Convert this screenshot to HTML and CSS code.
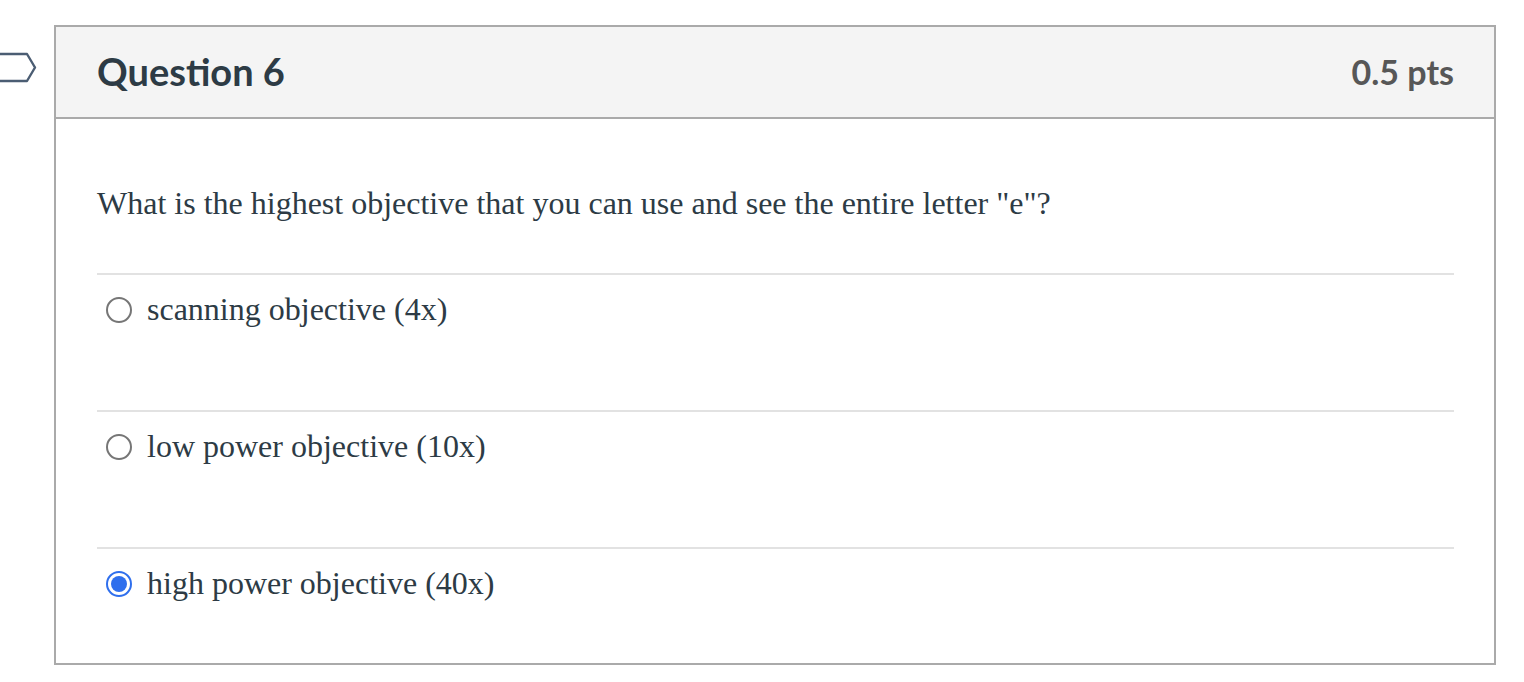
FILE: index.html
```html
<!DOCTYPE html>
<html>
<head>
<meta charset="utf-8">
<link rel="stylesheet" href="styles.css">
</head>
<body>
<div class="page">
  <div class="flag">
    <svg width="40" height="34" viewBox="0 0 40 34"><path d="M-4 3 H27 L35 16.5 L27 30 H-4" fill="none" stroke="#4b5d73" stroke-width="2.4" stroke-linejoin="round"/></svg>
  </div>
  <div class="question">
    <div class="q-header">
      <span class="q-title">Question 6</span>
      <span class="q-pts">0.5 pts</span>
    </div>
    <div class="q-body">
      <p class="q-text">What is the highest objective that you can use and see the entire letter "e"?</p>
      <div class="answers">
        <div class="answer">
          <span class="radio"></span>
          <span class="label">scanning objective (4x)</span>
        </div>
        <div class="answer">
          <span class="radio"></span>
          <span class="label">low power objective (10x)</span>
        </div>
        <div class="answer">
          <span class="radio checked"></span>
          <span class="label">high power objective (40x)</span>
        </div>
      </div>
    </div>
  </div>
</div>
</body>
</html>
```
FILE: styles.css
```css
html, body {
  margin: 0;
  padding: 0;
  background: #fff;
}
.page {
  position: relative;
  padding: 25px 0 0 54px;
}
.flag {
  position: absolute;
  left: 0;
  top: 51px;
}
.flag svg { display: block; }
.question {
  width: 1438px;
  border: 2px solid #aaaaaa;
}
.q-header {
  background: #f4f4f4;
  border-bottom: 2px solid #aaaaaa;
  height: 92px;
  box-sizing: border-box;
  display: flex;
  align-items: center;
  justify-content: space-between;
  padding: 0 40px 2px 41px;
  font-family: Lato, "Open Sans", sans-serif;
  font-weight: 700;
  color: #2d3b45;
}
.q-title {
  font-size: 38px;
}
.q-pts {
  font-size: 34px;
  color: #575757;
}
.q-body {
  padding: 0 40px 0 41px;
  font-family: "Liberation Serif", "Times New Roman", serif;
  color: #2d3b45;
}
.q-text {
  margin: 0;
  padding: 66px 0 52px 0;
  font-size: 32px;
  line-height: 36px;
}
.answers {
  display: flex;
  flex-direction: column;
}
.answer {
  border-top: 2px solid #e2e2e2;
  height: 137px;
  box-sizing: border-box;
  display: flex;
  align-items: flex-start;
  padding-top: 16px;
  padding-left: 9px;
}
.answer:last-child {
  height: 116px;
}
.radio {
  width: 26px;
  height: 26px;
  box-sizing: border-box;
  border: 2px solid #767676;
  border-radius: 50%;
  margin-top: 6px;
  flex: none;
  position: relative;
  background: #fff;
}
.radio.checked {
  border: 2px solid #2f6fed;
}
.radio.checked::after {
  content: "";
  position: absolute;
  left: 3px;
  top: 3px;
  width: 16px;
  height: 16px;
  border-radius: 50%;
  background: #2f6fed;
}
.label {
  margin-left: 15px;
  font-size: 32px;
  line-height: 36px;
}
```
